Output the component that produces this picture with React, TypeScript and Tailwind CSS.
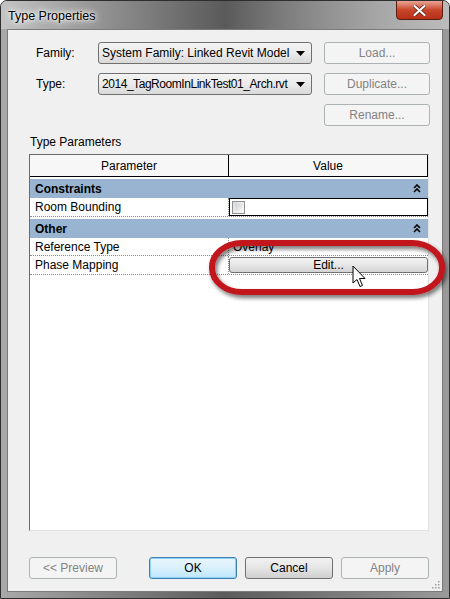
import React from "react";

const font = { fontFamily: '"Liberation Sans", Arial, sans-serif' };

function Combo({ text, tight }: { text: string; tight?: boolean }) {
  return (
    <div className="flex h-[22px] w-[214px] items-center justify-between overflow-hidden rounded-[3px] border border-[#707070] bg-gradient-to-b from-[#f3f3f3] via-[#ebebeb] to-[#d9d9d9] pl-[3px] pr-[6px] text-[12px] text-black">
      <span className={`whitespace-nowrap ${tight ? "tracking-[-0.45px]" : ""}`}>{text}</span>
      <svg width="9" height="5" viewBox="0 0 9 5" className="shrink-0">
        <polygon points="0,0 9,0 4.5,5" fill="#000" />
      </svg>
    </div>
  );
}

function DisBtn({ text, w = "w-[106px]" }: { text: string; w?: string }) {
  return (
    <div className={`flex h-[22px] ${w} items-center justify-center rounded-[3px] border border-[#adb2b5] bg-[#f4f4f4] text-[12px] text-[#838383]`}>
      {text}
    </div>
  );
}

function Chevrons() {
  return (
    <svg width="8" height="9" viewBox="0 0 8 9" className="mr-[7px]">
      <polyline points="1,4 4,1 7,4" fill="none" stroke="#000" strokeWidth="1.6" />
      <polyline points="1,8 4,5 7,8" fill="none" stroke="#000" strokeWidth="1.6" />
    </svg>
  );
}

function Group({ label }: { label: string }) {
  return (
    <div className="mt-[2px] flex h-[19px] items-center justify-between bg-[#98b4d0] pl-[5px] text-[12px] font-bold text-black">
      <span>{label}</span>
      <Chevrons />
    </div>
  );
}

export default function App() {
  return (
    <div
      className="relative h-[599px] w-[450px] overflow-hidden rounded-t-[7px] border border-[#2e2e2e] bg-gradient-to-r from-[#a9a9a9] via-[#5c5c5c] to-[#9a9a9a]"
      style={font}
    >
      <div className="flex h-full flex-col">
        {/* Title bar */}
        <div className="relative flex h-[28px] items-start bg-gradient-to-r from-[#c4c4c4] via-[#5a5a5a] to-[#a8a8a8]">
          <div className="absolute inset-0 bg-gradient-to-r from-transparent via-transparent to-[#c8c8c8] opacity-60" />
          <span
            className="relative ml-[7px] mt-[6px] text-[12.5px] text-black"
            style={{ textShadow: "0 0 6px #fff, 0 0 10px #fff, 0 0 3px #fff" }}
          >
            Type Properties
          </span>
          <div className="absolute right-[6px] top-[-1px] flex h-[20px] w-[47px] items-center justify-center rounded-b-[4px] border border-[#5a1d12] bg-gradient-to-b from-[#e6a493] via-[#c9452a] to-[#b52f16]">
            <svg width="13" height="11" viewBox="0 0 13 11">
              <path d="M1.5 1 L11.5 10 M11.5 1 L1.5 10" stroke="#5a1d12" strokeWidth="3.6" strokeLinecap="round" />
              <path d="M1.5 1 L11.5 10 M11.5 1 L1.5 10" stroke="#fff" strokeWidth="2.2" strokeLinecap="round" />
            </svg>
          </div>
        </div>

        {/* Content */}
        <div className="mx-[6px] mb-[6px] flex flex-1 flex-col border border-[#7a7a7a] bg-[#f0f0f0] pl-[21px] pr-[12px] text-[12px] text-black">
          <div className="mt-[12px] flex items-center">
            <span className="w-[69px] pl-[7px]">Family:</span>
            <Combo text="System Family: Linked Revit Model" />
            <div className="ml-[12px]">
              <DisBtn text="Load..." />
            </div>
          </div>
          <div className="mt-[9px] flex items-center">
            <span className="w-[69px] pl-[7px]">Type:</span>
            <Combo text="2014_TagRoomInLinkTest01_Arch.rvt" tight />
            <div className="ml-[12px]">
              <DisBtn text="Duplicate..." />
            </div>
          </div>
          <div className="mt-[9px] flex justify-end">
            <DisBtn text="Rename..." />
          </div>

          <div className="mt-[9px] pl-[1px] leading-[14px]">Type Parameters</div>

          {/* Table */}
          <div className="mt-[5px] h-[377px] w-[400px] border border-t-[#6b6b6b] border-l-[#6b6b6b] border-r-[#e3e3e3] border-b-[#e3e3e3] bg-white">
            <div className="flex h-[22px] border-b border-black bg-[#f7f7f7]">
              <div className="flex w-[199px] items-center justify-center border-r border-black">Parameter</div>
              <div className="flex flex-1 items-center justify-center border-r border-black">Value</div>
            </div>
            <Group label="Constraints" />
            <div className="flex h-[19px] border-b border-dotted border-[#8a8a8a]">
              <div className="flex w-[199px] items-center border-r border-dotted border-[#8a8a8a] pl-[5px]">Room Bounding</div>
              <div className="flex flex-1 items-center border border-black pl-[2px]">
                <div className="h-[13px] w-[13px] border border-[#8e8f8f] bg-gradient-to-br from-[#dcdcdc] to-[#fbfbfb] p-[2px]">
                  <div className="h-full w-full bg-gradient-to-br from-[#cbcfd5] to-[#f6f6f6]" />
                </div>
              </div>
            </div>
            <Group label="Other" />
            <div className="flex h-[18px] border-b border-dotted border-[#8a8a8a]">
              <div className="flex w-[199px] items-center border-r border-dotted border-[#8a8a8a] pl-[5px]">Reference Type</div>
              <div className="flex flex-1 items-center pl-[4px]">Overlay</div>
            </div>
            <div className="flex h-[19px] border-b border-dotted border-[#8a8a8a]">
              <div className="flex w-[199px] items-center border-r border-dotted border-[#8a8a8a] pl-[5px]">Phase Mapping</div>
              <div className="flex flex-1 items-center py-[1px]">
                <div className="flex h-full w-full items-center justify-center rounded-[3px] border border-[#707070] bg-gradient-to-b from-[#f3f3f3] via-[#e6e6e6] to-[#d3d3d3]">
                  Edit...
                </div>
              </div>
            </div>
          </div>

          <div className="mt-[26px] flex">
            <DisBtn text="<< Preview" w="w-[88px]" />
            <div className="ml-[32px] flex h-[22px] w-[88px] items-center justify-center rounded-[3px] border border-[#3c7fb1] bg-gradient-to-b from-[#eaf6fd] via-[#d9f0fc] to-[#bee6fd] shadow-[inset_0_0_0_1px_#8ed1f5]">
              OK
            </div>
            <div className="ml-[8px] flex h-[22px] w-[88px] items-center justify-center rounded-[3px] border border-[#707070] bg-gradient-to-b from-[#f2f2f2] via-[#e5e5e5] to-[#cfcfcf]">
              Cancel
            </div>
            <div className="ml-[8px]">
              <DisBtn text="Apply" w="w-[88px]" />
            </div>
          </div>
        </div>
      </div>

      {/* Red annotation ellipse */}
      <svg className="pointer-events-none absolute left-0 top-0" width="450" height="599">
        <defs>
          <filter id="sh" x="-20%" y="-50%" width="140%" height="200%">
            <feGaussianBlur in="SourceAlpha" stdDeviation="2" />
            <feOffset dx="2" dy="3" result="b" />
            <feComponentTransfer>
              <feFuncA type="linear" slope="0.55" />
            </feComponentTransfer>
            <feMerge>
              <feMergeNode />
              <feMergeNode in="SourceGraphic" />
            </feMerge>
          </filter>
        </defs>
        <rect x="211" y="242" width="230" height="49" rx="30" ry="24" fill="none" stroke="#c1121c" strokeWidth="6" filter="url(#sh)" />
        {/* cursor */}
        <path
          d="M352 265 L352 282 L356 278.5 L359 285.5 L361.5 284.5 L358.5 277.5 L364 277.5 Z"
          fill="#fff"
          stroke="#000"
          strokeWidth="1"
          strokeLinejoin="round"
        />
      </svg>

      {/* resize grip */}
      <svg className="absolute bottom-[9px] right-[9px]" width="10" height="10" viewBox="0 0 10 10">
        <g fill="#a0a0a0">
          <rect x="8" y="2" width="1.5" height="1.5" />
          <rect x="5" y="5" width="1.5" height="1.5" />
          <rect x="8" y="5" width="1.5" height="1.5" />
          <rect x="2" y="8" width="1.5" height="1.5" />
          <rect x="5" y="8" width="1.5" height="1.5" />
          <rect x="8" y="8" width="1.5" height="1.5" />
        </g>
      </svg>
    </div>
  );
}
